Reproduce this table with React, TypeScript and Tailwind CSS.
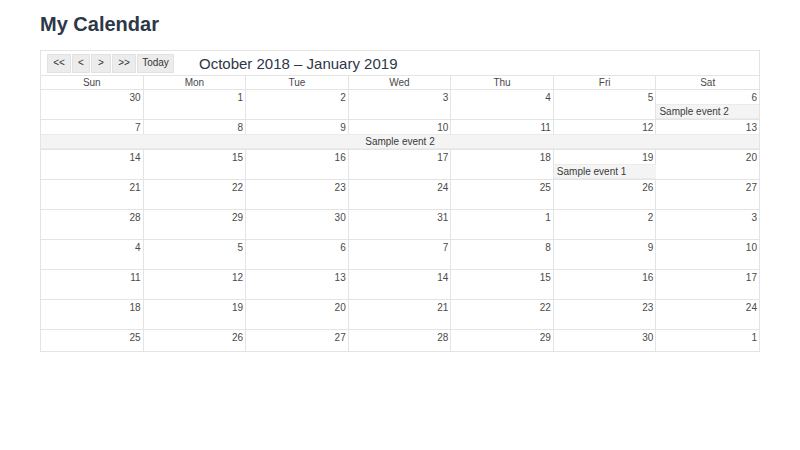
import React from 'react';

type Ev = { title: string; start: number; span: number; center?: boolean };
type Week = { days: number[]; events: Ev[]; h: string };

const dayNames = ['Sun', 'Mon', 'Tue', 'Wed', 'Thu', 'Fri', 'Sat'];

const weeks: Week[] = [
  { days: [30, 1, 2, 3, 4, 5, 6], events: [{ title: 'Sample event 2', start: 7, span: 1 }], h: 'h-[30px]' },
  { days: [7, 8, 9, 10, 11, 12, 13], events: [{ title: 'Sample event 2', start: 1, span: 7, center: true }], h: 'h-[30px]' },
  { days: [14, 15, 16, 17, 18, 19, 20], events: [{ title: 'Sample event 1', start: 6, span: 1 }], h: 'h-[30px]' },
  { days: [21, 22, 23, 24, 25, 26, 27], events: [], h: 'h-[30px]' },
  { days: [28, 29, 30, 31, 1, 2, 3], events: [], h: 'h-[30px]' },
  { days: [4, 5, 6, 7, 8, 9, 10], events: [], h: 'h-[30px]' },
  { days: [11, 12, 13, 14, 15, 16, 17], events: [], h: 'h-[30px]' },
  { days: [18, 19, 20, 21, 22, 23, 24], events: [], h: 'h-[30px]' },
  { days: [25, 26, 27, 28, 29, 30, 1], events: [], h: 'h-[22px]' },
];

const colStart = ['', 'col-start-1', 'col-start-2', 'col-start-3', 'col-start-4', 'col-start-5', 'col-start-6', 'col-start-7'];
const colSpan = ['', 'col-span-1', 'col-span-2', 'col-span-3', 'col-span-4', 'col-span-5', 'col-span-6', 'col-span-7'];

const ToolButton: React.FC<{ label: string; w: string }> = ({ label, w }) => (
  <button className={`${w} h-[19px] bg-[#ececec] border border-[#e2e2e2] text-[10px] text-[#333] leading-none flex items-center justify-center`}>
    {label}
  </button>
);

const WeekRow: React.FC<{ week: Week }> = ({ week }) => (
  <div className={`grid grid-cols-7 grid-rows-[14px_15px] ${week.h} border-t border-[#e4e4e4] overflow-hidden`}>
    {week.days.map((d, i) => (
      <div
        key={i}
        className={`${colStart[i + 1]} row-start-1 row-span-2 ${i < 6 ? 'border-r border-[#e4e4e4]' : ''} text-right pr-[2px] pt-[1px] text-[10px] leading-[13px] text-[#4a4a4a]`}
      >
        {d}
      </div>
    ))}
    {week.events.map((e, i) => (
      <div
        key={'e' + i}
        className={`${colStart[e.start]} ${colSpan[e.span]} row-start-2 bg-[#f4f4f4] border-y border-[#ebebeb] text-[10px] leading-[13px] text-[#3a3a3a] ${e.center ? 'text-center' : 'pl-[3px]'}`}
      >
        {e.title}
      </div>
    ))}
  </div>
);

export default function App() {
  return (
    <div className="min-h-[450px] bg-white px-10 pt-[11px] font-['Liberation_Sans',Arial,sans-serif]">
      <h1 className="text-[20px] leading-[26px] font-bold text-[#2d3748] mb-[13px]">My Calendar</h1>
      <div className="w-[720px] border border-[#e4e4e4]">
        <div className="h-[24px] flex items-center pl-[6px]">
          <div className="flex gap-[1px]">
            <ToolButton label="<<" w="w-[24px]" />
            <ToolButton label="<" w="w-[18px]" />
            <ToolButton label=">" w="w-[20px]" />
            <ToolButton label=">>" w="w-[24px]" />
            <ToolButton label="Today" w="w-[37px]" />
          </div>
          <div className="ml-[25px] text-[15px] leading-none text-[#2d3748]">October 2018 – January 2019</div>
        </div>
        <div className="grid grid-cols-7 h-[14px] border-t border-[#e4e4e4]">
          {dayNames.map((n, i) => (
            <div key={n} className={`text-center text-[10px] leading-[13px] text-[#4a4a4a] ${i < 6 ? 'border-r border-[#e4e4e4]' : ''}`}>
              {n}
            </div>
          ))}
        </div>
        {weeks.map((w, i) => (
          <WeekRow key={i} week={w} />
        ))}
      </div>
    </div>
  );
}
